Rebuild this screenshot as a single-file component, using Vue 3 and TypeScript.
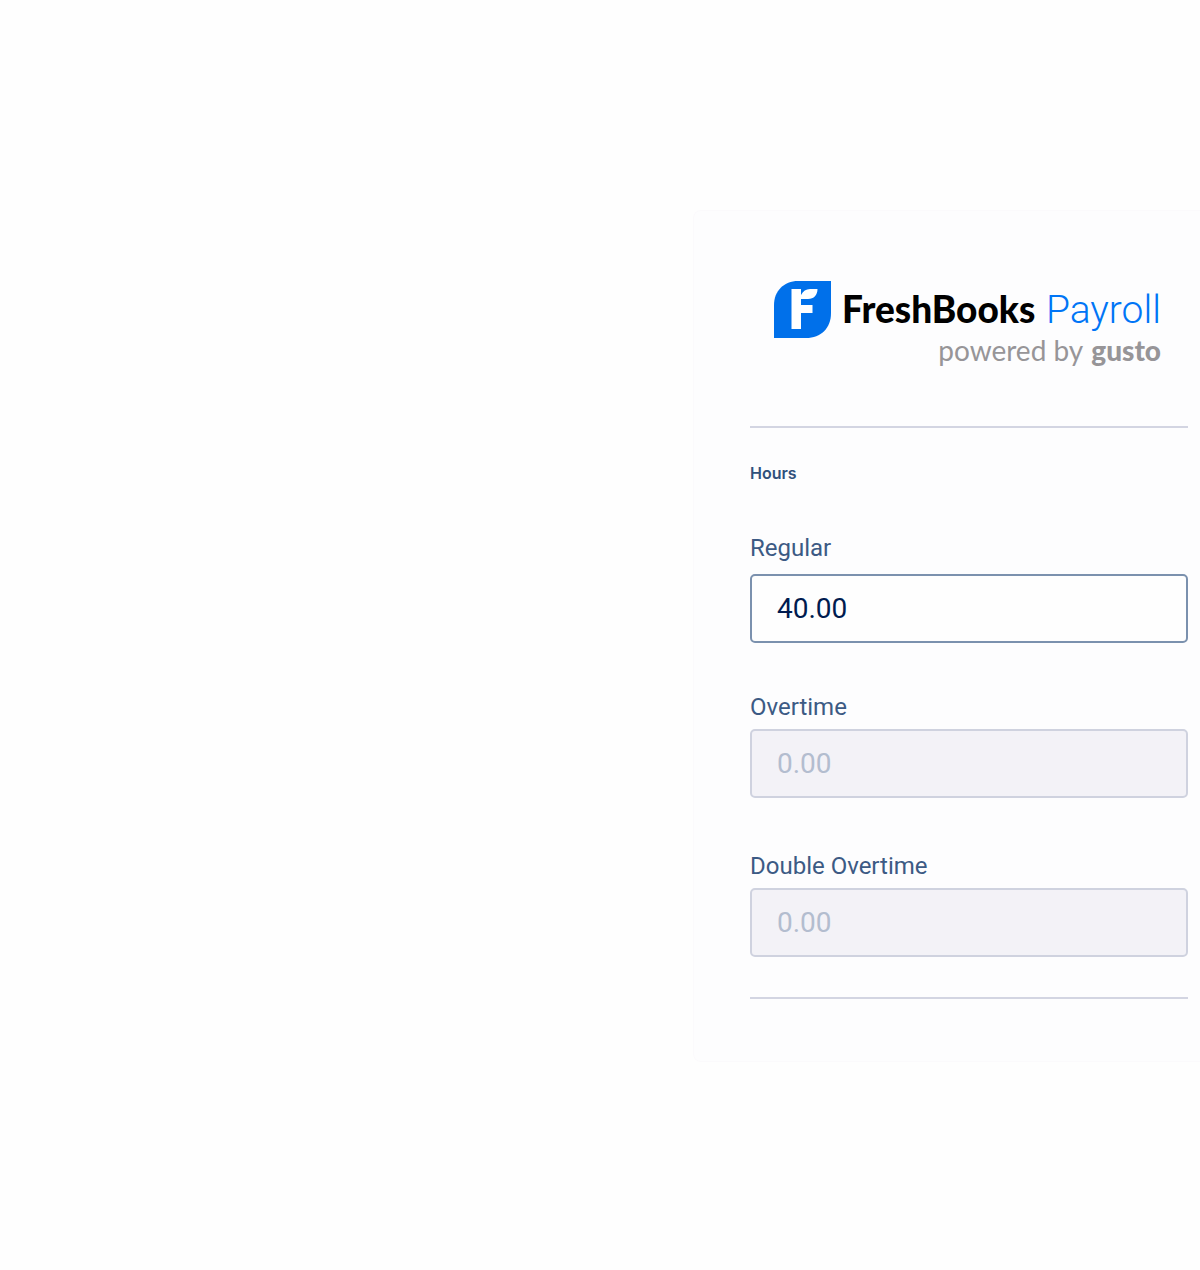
<script setup lang="ts">
import { ref } from 'vue'

interface HoursField {
  id: string
  label: string
  placeholder: string
  disabled: boolean
}

const fields: HoursField[] = [
  { id: 'regular', label: 'Regular', placeholder: '0.00', disabled: false },
  { id: 'overtime', label: 'Overtime', placeholder: '0.00', disabled: true },
  { id: 'double-overtime', label: 'Double Overtime', placeholder: '0.00', disabled: true },
]

const hours = ref<Record<string, string>>({
  regular: '40.00',
  overtime: '',
  'double-overtime': '',
})
</script>

<template>
  <main class="page">
    <section class="card">
      <header class="brand">
        <div class="brand-row">
          <svg class="brand-mark" viewBox="0 0 57 57" aria-hidden="true">
            <path d="M0 57V24C0 10 10 0 24 0H57V32C57 47 47 57 32 57Z" fill="#0070ea" />
            <path
              d="M17.500 8H27V14C29 10 32 8 36 8H43.500C43.500 14 40 18 34 18H27V24H38.500V32H27V48H17.500Z"
              fill="#fff"
            />
          </svg>
          <span class="brand-name">FreshBooks</span>
          <span class="brand-product">Payroll</span>
        </div>
        <p class="powered">powered by <span class="gusto">gusto</span></p>
      </header>

      <form class="hours" @submit.prevent>
        <h2 class="heading">Hours</h2>
        <div v-for="field in fields" :key="field.id" class="field" :class="{ active: !field.disabled }">
          <label class="label" :for="field.id">{{ field.label }}</label>
          <input
            :id="field.id"
            v-model="hours[field.id]"
            class="input"
            type="text"
            inputmode="decimal"
            :placeholder="field.placeholder"
            :disabled="field.disabled"
          />
        </div>
      </form>
    </section>
  </main>
</template>

<style>
body {
  margin: 0;
  background: #fefefe;
}
</style>

<style scoped>
.page {
  box-sizing: border-box;
  display: grid;
  grid-template-columns: minmax(0, 693fr) minmax(0, 507fr);
  min-height: 100vh;
  padding: 210px 0 208px;
  align-items: start;
}

.card {
  grid-column: 2;
  box-sizing: border-box;
  padding: 70px 12px 62px 56px;
  border: 1px solid #fbfafc;
  border-right: 0;
  border-radius: 8px 0 0 8px;
  background: #fdfdfe;
}

.brand {
  padding: 0 27px 56px 24px;
}

.brand-row {
  display: flex;
  align-items: baseline;
  height: 57px;
  line-height: 56px;
  white-space: nowrap;
}

.brand-mark {
  flex: none;
  align-self: center;
  width: 57px;
  height: 57px;
}

.brand-name {
  margin-left: 11px;
  color: #000;
  font-family: Lato, sans-serif;
  font-size: 37px;
  font-weight: 900;
}

.brand-product {
  margin-left: auto;
  color: #0075f6;
  font-family: Roboto, sans-serif;
  font-size: 39px;
  font-weight: 300;
}

.powered {
  display: flex;
  justify-content: flex-end;
  gap: 8px;
  margin: 0;
  padding-bottom: 8px;
  color: #979598;
  font-family: Lato, sans-serif;
  font-size: 28px;
  line-height: 24px;
}

.gusto {
  font-weight: 900;
}

.hours {
  padding: 35px 0 40px;
  border: solid #d3d5e2;
  border-width: 2px 0;
}

.heading {
  margin: 0 0 49px;
  color: #30507c;
  font-family: Inter, sans-serif;
  font-size: 16px;
  font-weight: 600;
  line-height: 20px;
}

.field + .field {
  margin-top: 52px;
}

.active + .field {
  margin-top: 48px;
}

.label {
  display: block;
  margin-bottom: 6px;
  color: #3c5a84;
  font-family: Roboto, sans-serif;
  font-size: 24px;
  line-height: 32px;
}

.active .label {
  margin-bottom: 10px;
}

.input {
  box-sizing: border-box;
  display: block;
  width: 100%;
  height: 69px;
  margin: 0;
  padding: 0 25px;
  border: 2px solid #7b91ae;
  border-radius: 5px;
  background: #fefefe;
  color: #001b4f;
  font-family: Roboto, sans-serif;
  font-size: 28px;
}

.input:disabled {
  border-color: #cfd2df;
  background: #f3f2f7;
}

.input::placeholder {
  color: #b3bdcf;
  opacity: 1;
}
</style>
